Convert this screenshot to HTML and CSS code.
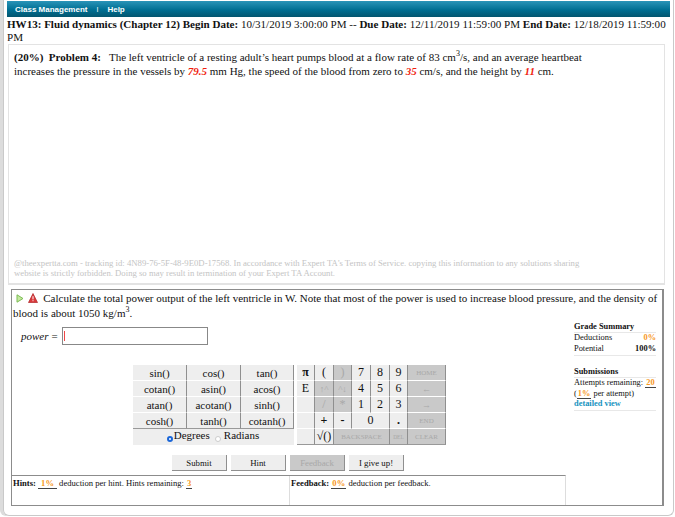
FILE: index.html
```html
<!DOCTYPE html>
<html lang="en">
<head>
    <meta charset="UTF-8">
    <title>HW13: Fluid dynamics</title>
    <link rel="stylesheet" href="styles.css">
</head>
<body>
    <div class="frame">
        <div class="navbar"><span>Class Management</span><span class="sep">I</span><span>Help</span></div>
        <div class="title"><b>HW13: Fluid dynamics (Chapter 12) Begin Date:</b> 10/31/2019 3:00:00 PM -- <b>Due Date:</b> 12/11/2019 11:59:00 PM <b>End Date:</b> 12/18/2019 11:59:00 PM</div>

        <div class="problem">
            <p class="statement"><b>(20%)&nbsp; Problem 4:</b>&nbsp;&nbsp; The left ventricle of a resting adult’s heart pumps blood at a flow rate of 83 cm<sup>3</sup>/s, and an average heartbeat increases the pressure in the vessels by <i class="given">79.5</i> mm Hg, the speed of the blood from zero to <i class="given">35</i> cm/s, and the height by <i class="given">11</i> cm.</p>
            <p class="notice">@theexpertta.com - tracking id: 4N89-76-5F-48-9E0D-17568. In accordance with Expert TA's Terms of Service. copying this information to any solutions sharing website is strictly forbidden. Doing so may result in termination of your Expert TA Account.</p>
        </div>

        <div class="question">
            <p class="ask">
                <svg class="icon" width="8" height="9" viewBox="0 0 8 9"><path d="M1 .8 7 4.5 1 8.2Z" fill="#c4eaa0" stroke="#7dbb55"/></svg>
                <svg class="icon" width="10" height="10" viewBox="0 0 10 10"><path d="M5 .5 9.5 9.5H.5Z" fill="#d9393b" stroke="#b02628" stroke-width=".7"/><path d="M5 3.2V6.4M5 7.2V8.2" stroke="#fff" stroke-width="1"/></svg>
                &nbsp;Calculate the total power output of the left ventricle in W. Note that most of the power is used to increase blood pressure, and the density of blood is about 1050 kg/m<sup>3</sup>.
            </p>
            <div class="work-area">
                <div class="work">
                    <div class="answer-line">
                        <i class="var">power</i> <span class="eq">=</span>
                        <div class="answer-box"><span class="caret"></span></div>
                    </div>
                    <div class="keypad">
                        <div class="funcs">
                            <button>sin()</button><button>cos()</button><button>tan()</button>
                            <button>cotan()</button><button>asin()</button><button>acos()</button>
                            <button>atan()</button><button>acotan()</button><button>sinh()</button>
                            <button>cosh()</button><button>tanh()</button><button>cotanh()</button>
                            <div class="angle">
                                <span class="radio on"></span><span class="angle-label">Degrees</span>
                                <span class="radio"></span><span class="angle-label">Radians</span>
                            </div>
                        </div>
                        <div class="keys">
                            <button class="bold">π</button><button>(</button><button class="off">)</button><button>7</button><button>8</button><button>9</button><button class="off small">HOME</button>
                            <button>E</button><button class="off arrow">↑^</button><button class="off arrow">^↓</button><button>4</button><button>5</button><button>6</button><button class="off arrow">←</button>
                            <button></button><button class="off">/</button><button class="off">*</button><button>1</button><button>2</button><button>3</button><button class="off arrow">→</button>
                            <button></button><button class="bold">+</button><button class="bold">-</button><button class="wide-2">0</button><button class="bold">.</button><button class="off small">END</button>
                            <button></button><button>√()</button><button class="off small wide-3">BACKSPACE</button><button class="off tiny">DEL</button><button class="off small">CLEAR</button>
                        </div>
                    </div>
                    <div class="actions">
                        <button>Submit</button>
                        <button>Hint</button>
                        <button class="off">Feedback</button>
                        <button>I give up!</button>
                    </div>
                </div>
                <div class="sidebar">
                    <div class="side-block">
                        <h4>Grade Summary</h4>
                        <div class="side-row"><span>Deductions</span><b class="orange">0%</b></div>
                        <div class="side-row side-last"><span>Potential</span><b>100%</b></div>
                    </div>
                    <div class="side-block">
                        <h4>Submissions</h4>
                        <div class="side-text">Attempts remaining: <b class="orange under">20</b><br>(<b class="orange under">1%</b> per attempt)<br><a class="detail">detailed view</a></div>
                    </div>
                </div>
            </div>
            <div class="messages">
                <div class="msg msg-hints"><b>Hints:</b> <b class="orange under pad">1%</b> deduction per hint. Hints remaining: <b class="orange under">3</b></div>
                <div class="msg msg-feedback"><b>Feedback:</b> <b class="orange under">0%</b> deduction per feedback.</div>
            </div>
        </div>
    </div>
</body>
</html>
```

FILE: styles.css
```css
html, body {
    margin: 0;
    height: 517px;
    overflow: hidden;
    background-color: #fff;
}
body {
    font-family: "Liberation Serif", "Times New Roman", serif;
    color: #111;
    font-size: 12px;
}
.frame {
    box-sizing: border-box;
    width: 671px;
    height: 516px;
    margin-left: 3px;
    padding: 1px 3px 0 3px;
    border: 1px solid #c9c9c9;
    border-top: none;
    border-radius: 0 0 6px 6px;
    box-shadow: -3px 0 0 #dcdcdc;
}
.navbar {
    height: 16px;
    padding-left: 8px;
    display: flex;
    align-items: center;
    gap: 9px;
    font-family: "Liberation Sans", Arial, sans-serif;
    font-size: 8px;
    font-weight: bold;
    color: #fff;
    background: linear-gradient(#2a94b8, #006f93 55%, #04566f);
}
.navbar .sep {
    font-size: 7px;
    font-weight: normal;
}
.title {
    font-size: 11.05px;
    line-height: 13px;
    padding-top: 1px;
    width: 662px;
}
.problem {
    box-sizing: border-box;
    height: 241px;
    margin-left: 1px;
    width: 657px;
    padding: 5px 5px 0 5px;
    border: 1px solid #e3e3e3;
    border-bottom-width: 2px;
    display: flex;
    flex-direction: column;
    justify-content: space-between;
}
.statement {
    margin: 0;
    font-size: 11px;
    line-height: 14px;
    width: 590px;
}
sup {
    font-size: 8px;
    line-height: 0;
}
.given {
    color: #f01e10;
    font-weight: bold;
}
.notice {
    margin: 0 0 5px;
    font-size: 8.7px;
    line-height: 10px;
    color: #c4c4c4;
    width: 575px;
}
.question {
    box-sizing: border-box;
    width: 653px;
    height: 217px;
    margin: 4px 0 0 4px;
    border: 1px solid #8c8c8c;
    border-right-width: 2px;
    display: flex;
    flex-direction: column;
}
.ask {
    margin: 0;
    padding: 1px 0 0 1px;
    font-size: 11px;
    line-height: 15px;
}
.icon {
    margin-left: 1px;
    vertical-align: -1px;
}
.icon:first-child {
    margin-left: 3px;
}
.work-area {
    display: flex;
    flex: 1;
}
.work {
    width: 560px;
}
.answer-line {
    display: flex;
    align-items: center;
    padding: 6px 0 0 9px;
    font-size: 11px;
    gap: 3px;
}
.answer-box {
    box-sizing: border-box;
    width: 146px;
    height: 18px;
    border: 1px solid #888;
    padding: 3px 1px;
    margin-left: 1px;
}
.caret {
    display: block;
    width: 1px;
    height: 10px;
    background-color: #f04848;
}
.keypad {
    display: flex;
    gap: 3px;
    margin: 20px 0 0 121px;
}
button {
    font: inherit;
    font-size: 11px;
    color: #111;
    padding: 0;
    background-color: #eee;
    border: none;
    border-right: 1px solid #8f8f8f;
    border-bottom: 1px solid #fff;
}
.funcs {
    display: grid;
    grid-template-columns: 54px 54px 53px;
    grid-auto-rows: 16px;
}
.funcs button:nth-child(n+10) {
    border-bottom-color: #999;
}
.funcs .angle {
    grid-column: 1 / 4;
    background-color: #eee;
    display: flex;
    justify-content: center;
    padding-left: 4px;
    font-size: 11px;
    line-height: 13px;
    height: 16px;
}
.angle-label {
    margin-right: 5px;
}
.radio {
    box-sizing: border-box;
    width: 6px;
    height: 6px;
    margin: 7px 3px 0 0;
    border: 1px solid #ccc;
    border-radius: 50%;
    background-color: #fff;
}
.radio.on {
    border: 2px solid #1a66d8;
    margin-right: 1px;
}
.keys {
    display: grid;
    grid-template-columns: 18px 19px 18px 19px 19px 18px 38px;
    grid-auto-rows: 16px;
}
.keys button { font-size: 12px; }
.keys button:nth-last-child(-n+5) {
    border-bottom-color: #999;
}
.keys .wide-2 { grid-column: span 2; }
.keys .wide-3 { grid-column: span 3; }
.bold { font-weight: bold; }
button.off {
    background-color: #c9c9c9;
    color: #a8a8a8;
}
.keys button.small { font-size: 7px; }
.keys button.arrow { font-size: 9px; }
.keys button.tiny { font-size: 5.5px; }
.actions {
    display: flex;
    gap: 4px;
    margin: 10px 0 0 160px;
}
.actions button {
    width: 55px;
    height: 16px;
    font-size: 8.8px;
    border-bottom-color: #8f8f8f;
}
.sidebar {
    width: 82px;
    margin-left: 2px;
    padding-top: 1px;
    font-size: 8.4px;
}
.side-block {
    margin-bottom: 11px;
}
h4 {
    margin: 0;
    font-size: 8.4px;
    line-height: 10px;
    border-bottom: 1px solid #e8e8e8;
}
.side-row {
    display: flex;
    justify-content: space-between;
    line-height: 10px;
    padding-bottom: 1px;
}
.side-last {
    border-bottom: 1px solid #e8e8e8;
}
.side-text {
    line-height: 10.5px;
    white-space: nowrap;
    border-bottom: 1px solid #e8e8e8;
}
.orange { color: #f7981d; }
.under {
    border-bottom: 1px solid #444;
    padding: 0 1px;
}
.pad { padding: 0 3px; }
.detail {
    color: #1793c0;
    font-weight: bold;
}
.messages {
    display: flex;
    height: 30px;
    width: 554px;
    box-sizing: border-box;
    border-top: 1px solid #8c8c8c;
    border-right: 1px solid #ddd;
    font-size: 8.6px;
    line-height: 11px;
}
.msg {
    padding: 2px 1px 0;
}
.msg-hints {
    width: 275px;
    border-right: 1px solid #ddd;
}
```
